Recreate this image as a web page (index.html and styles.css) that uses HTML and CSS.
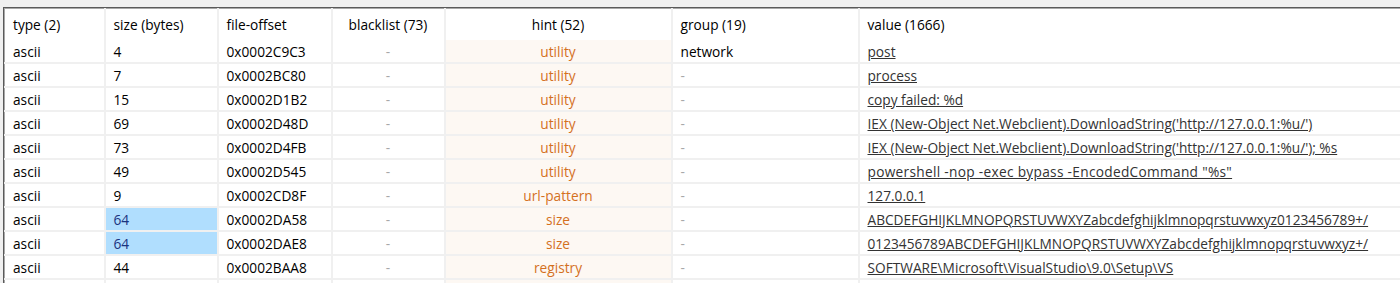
FILE: index.html
```html
<!DOCTYPE html>
<html>
<head>
<meta charset="utf-8">
<link rel="stylesheet" href="styles.css">
</head>
<body>
<div class="frame">
<table class="grid">
<colgroup>
<col class="c-type"><col class="c-size"><col class="c-off"><col class="c-bl"><col class="c-hint"><col class="c-group"><col class="c-value">
</colgroup>
<thead>
<tr>
<th>type (2)</th><th>size (bytes)</th><th>file-offset</th><th class="center">blacklist (73)</th><th class="center">hint (52)</th><th>group (19)</th><th>value (1666)</th>
</tr>
</thead>
<tbody>
<tr><td>ascii</td><td>4</td><td>0x0002C9C3</td><td class="dash">-</td><td class="hint">utility</td><td>network</td><td class="val"><span>post</span></td></tr>
<tr><td>ascii</td><td>7</td><td>0x0002BC80</td><td class="dash">-</td><td class="hint">utility</td><td class="gdash">-</td><td class="val"><span>process</span></td></tr>
<tr><td>ascii</td><td>15</td><td>0x0002D1B2</td><td class="dash">-</td><td class="hint">utility</td><td class="gdash">-</td><td class="val"><span>copy failed: %d</span></td></tr>
<tr><td>ascii</td><td>69</td><td>0x0002D48D</td><td class="dash">-</td><td class="hint">utility</td><td class="gdash">-</td><td class="val"><span>IEX (New-Object Net.Webclient).DownloadString('http://127.0.0.1:%u/')</span></td></tr>
<tr><td>ascii</td><td>73</td><td>0x0002D4FB</td><td class="dash">-</td><td class="hint">utility</td><td class="gdash">-</td><td class="val"><span>IEX (New-Object Net.Webclient).DownloadString('http://127.0.0.1:%u/'); %s</span></td></tr>
<tr><td>ascii</td><td>49</td><td>0x0002D545</td><td class="dash">-</td><td class="hint">utility</td><td class="gdash">-</td><td class="val"><span class="wide">powershell -nop -exec bypass -EncodedCommand "%s"</span></td></tr>
<tr><td>ascii</td><td>9</td><td>0x0002CD8F</td><td class="dash">-</td><td class="hint">url-pattern</td><td class="gdash">-</td><td class="val"><span>127.0.0.1</span></td></tr>
<tr><td>ascii</td><td class="sel">64</td><td>0x0002DA58</td><td class="dash">-</td><td class="hint">size</td><td class="gdash">-</td><td class="val"><span>ABCDEFGHIJKLMNOPQRSTUVWXYZabcdefghijklmnopqrstuvwxyz0123456789+/</span></td></tr>
<tr><td>ascii</td><td class="sel">64</td><td>0x0002DAE8</td><td class="dash">-</td><td class="hint">size</td><td class="gdash">-</td><td class="val"><span>0123456789ABCDEFGHIJKLMNOPQRSTUVWXYZabcdefghijklmnopqrstuvwxyz+/</span></td></tr>
<tr><td>ascii</td><td>44</td><td>0x0002BAA8</td><td class="dash">-</td><td class="hint">registry</td><td class="gdash">-</td><td class="val"><span>SOFTWARE\Microsoft\VisualStudio\9.0\Setup\VS</span></td></tr>
<tr class="partial"><td></td><td></td><td></td><td></td><td class="hint"></td><td></td><td></td></tr>
</tbody>
</table>
</div>
</body>
</html>
```
FILE: styles.css
```css
html, body {
  margin: 0;
  padding: 0;
  background: #f0f0f0;
  overflow: hidden;
}
body {
  width: 1400px;
  height: 283px;
  font-family: "Open Sans", "Noto Sans", sans-serif;
  font-size: 13.7px;
  color: #000;
}
.frame {
  margin: 7px 0 0 3px;
  border-top: 1px solid #5a5a5a;
  border-left: 1px solid #5a5a5a;
  background: #fff;
  height: 276px;
  overflow: hidden;
}
.grid {
  border-collapse: collapse;
  table-layout: fixed;
  width: 1450px;
  border-top: 1px solid #a8a8a8;
  border-left: 1px solid #a8a8a8;
}
.c-type { width: 100px; }
.c-size { width: 113px; }
.c-off { width: 114px; }
.c-bl { width: 113px; }
.c-hint { width: 227px; }
.c-group { width: 187px; }
.c-value { width: 596px; }
th {
  height: 31px;
  font-weight: normal;
  text-align: left;
  padding: 0 8px;
  border-right: 2px solid #f0f0f0;
  white-space: nowrap;
}
td {
  height: 22px;
  padding: 0 8px;
  border-right: 2px solid #f0f0f0;
  border-bottom: 2px solid #f0f0f0;
  white-space: nowrap;
  overflow: hidden;
}
.center { text-align: center; }
.dash {
  text-align: center;
  color: #a8a8a8;
}
.gdash { color: #a8a8a8; }
.hint {
  text-align: center;
  color: #d4701e;
  background: #fdf8f3;
}
.val span {
  color: #333;
  text-decoration: underline;
}
.val .wide { letter-spacing: 0.3px; }
.sel {
  background: #b0defe;
  color: #1a3380;
}
.partial td { height: 5px; border-bottom: none; }
```
